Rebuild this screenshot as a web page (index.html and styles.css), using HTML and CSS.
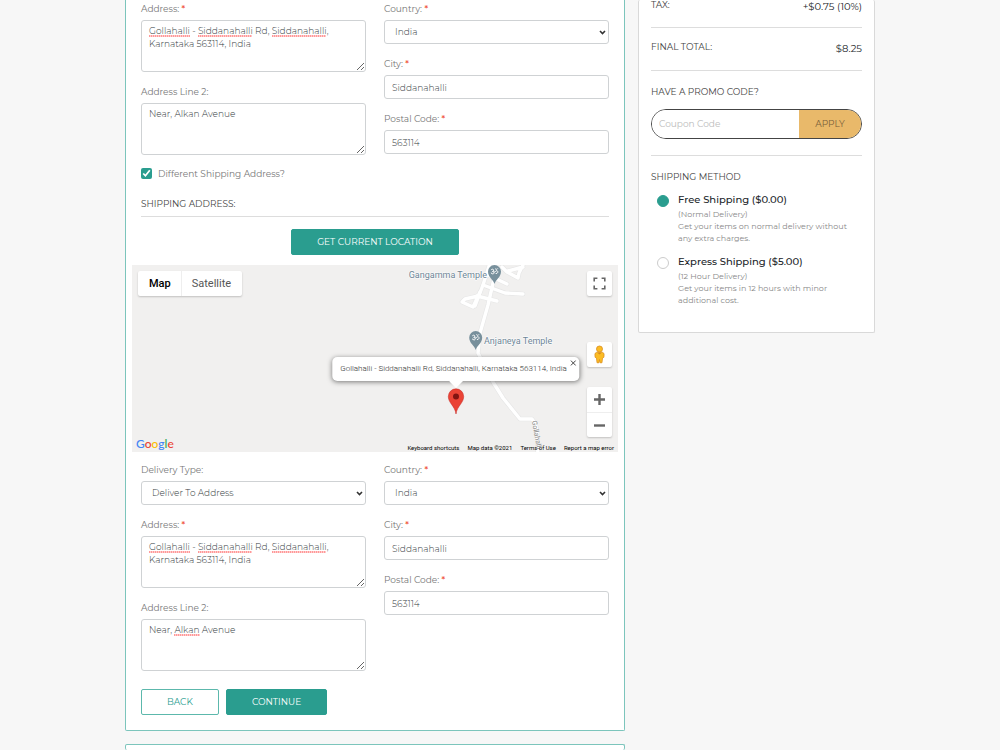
FILE: index.html
```html
<!DOCTYPE html>
<html lang="en">
<head>
    <meta charset="UTF-8">
    <meta name="viewport" content="width=device-width, initial-scale=1.0">
    <title>Checkout</title>
    <link rel="stylesheet" href="styles.css">
</head>
<body>

    <div class="page">
        <main class="checkout">
            <form class="card step">
                <div class="columns">
                    <div>
                        <div class="field">
                            <label for="bill-address">Address: <span class="required">*</span></label>
                            <div class="spell">
                                <div class="spell-marks"><i class="mark"></i><i class="mark mark-long"></i><i class="mark mark-long mark-third"></i></div>
                                <textarea id="bill-address" spellcheck="false">Gollahalli - Siddanahalli Rd, Siddanahalli, Karnataka 563114, India</textarea>
                            </div>
                        </div>
                        <div class="field">
                            <label for="bill-address2">Address Line 2:</label>
                            <textarea id="bill-address2" spellcheck="false">Near, Alkan Avenue</textarea>
                        </div>
                    </div>
                    <div>
                        <div class="field">
                            <label for="bill-country">Country: <span class="required">*</span></label>
                            <select id="bill-country"><option>India</option></select>
                        </div>
                        <div class="field">
                            <label for="bill-city">City: <span class="required">*</span></label>
                            <input type="text" id="bill-city" value="Siddanahalli">
                        </div>
                        <div class="field">
                            <label for="bill-postal">Postal Code: <span class="required">*</span></label>
                            <input type="text" id="bill-postal" value="563114">
                        </div>
                    </div>
                </div>

                <div class="check-row">
                    <input type="checkbox" id="different" checked>
                    <label for="different">Different Shipping Address?</label>
                </div>

                <h2 class="section-title">SHIPPING ADDRESS:</h2>

                <button type="button" class="btn btn-fill btn-location">GET CURRENT LOCATION</button>

                <div class="map">
                    <svg class="map-canvas" viewBox="0 0 486 187" preserveAspectRatio="xMidYMid slice" role="img" aria-label="Map">
                        <g class="road-edge">
                            <path d="M358 -2 L351 20 L343 41"/>
                            <path d="M364 5 L356 40 L348 68 L346 88 L361 117 L371 133 L388 154 L400 154 Q405 160 405 168 L406 190"/>
                            <path d="M351 20 L373 28 L391 29"/>
                            <path d="M356 10 L375 19"/>
                            <path d="M345 31 L365 36"/>
                            <path d="M348 27 L341 42 L330 37 L333 34 L346 31"/>
                            <path d="M370 2 L375 7 L386 13 L387 8 L392 -2 M376 6 L391 2"/>
                        </g>
                        <g class="road">
                            <path d="M358 -2 L351 20 L343 41"/>
                            <path d="M364 5 L356 40 L348 68 L346 88 L361 117 L371 133 L388 154 L400 154 Q405 160 405 168 L406 190"/>
                            <path d="M351 20 L373 28 L391 29"/>
                            <path d="M356 10 L375 19"/>
                            <path d="M345 31 L365 36"/>
                            <path d="M348 27 L341 42 L330 37 L333 34 L346 31"/>
                            <path d="M370 2 L375 7 L386 13 L387 8 L392 -2 M376 6 L391 2"/>
                        </g>
                        <text class="road-name" transform="translate(400 156) rotate(80)">Gollahalli</text>

                        <g transform="translate(362.5 6.5)">
                            <path class="poi" d="M0 12.5 C-1 8 -6.5 6 -6.5 0 A6.5 6.5 0 0 1 6.5 0 C6.5 6 1 8 0 12.5Z"/>
                            <path class="poi-glyph" d="M-3.4 -1.6 C-2 -3 -0.4 -2 -1 -0.6 L-2 0 C0 0 0 2.6 -1.8 2.4 L-3.6 1.4 M-1 0.2 C1 1.4 1 -1.2 2.6 -0.8 C4 0 3.2 2.4 1.2 2 M0.6 -3 C1.4 -1.8 2.6 -2 3.2 -3"/>
                        </g>
                        <text class="poi-name" x="355" y="13" text-anchor="end">Gangamma Temple</text>

                        <g transform="translate(343.7 72.5)">
                            <path class="poi" d="M0 12.5 C-1 8 -6.5 6 -6.5 0 A6.5 6.5 0 0 1 6.5 0 C6.5 6 1 8 0 12.5Z"/>
                            <path class="poi-glyph" d="M-3.4 -1.6 C-2 -3 -0.4 -2 -1 -0.6 L-2 0 C0 0 0 2.6 -1.8 2.4 L-3.6 1.4 M-1 0.2 C1 1.4 1 -1.2 2.6 -0.8 C4 0 3.2 2.4 1.2 2 M0.6 -3 C1.4 -1.8 2.6 -2 3.2 -3"/>
                        </g>
                        <text class="poi-name" x="352" y="79">Anjaneya Temple</text>

                        <path fill="#ea4335" stroke="#c5221f" stroke-width="0.5" d="M324 149 C323 141 316.3 138 316.3 131.5 A7.7 7.7 0 0 1 331.7 131.5 C331.7 138 325 141 324 149Z"/>
                        <circle cx="324" cy="131.5" r="3" fill="#811411"/>
                    </svg>

                    <div class="map-types">
                        <button type="button" class="active">Map</button>
                        <button type="button">Satellite</button>
                    </div>

                    <button type="button" class="map-button map-full" aria-label="Fullscreen">
                        <svg width="13" height="13" viewBox="0 0 13 13" fill="none" stroke="#666" stroke-width="1.6"><path d="M1.2 4.4V1.2H4.4 M8.6 1.2H11.8V4.4 M11.8 8.6V11.8H8.6 M4.4 11.8H1.2V8.6"/></svg>
                    </button>
                    <button type="button" class="map-button map-pegman" aria-label="Street View">
                        <svg width="11" height="19" viewBox="0 0 12 20">
                            <path d="M3 7.5 Q1 8 1 10 L1.2 13 L2.7 14 L3.3 19 H5.4 L6 15.5 L6.6 19 H8.7 L9.3 14 L10.8 13 L11 10 Q11 8 9 7.5Z" fill="#fbbc24" stroke="#d98a1c" stroke-width="0.8"/>
                            <path d="M3.6 8 H8.4 L6 10Z" fill="#d98a1c"/>
                            <circle cx="6" cy="4" r="3.3" fill="#fbbc24" stroke="#d98a1c" stroke-width="0.8"/>
                        </svg>
                    </button>
                    <div class="map-zoom">
                        <button type="button" aria-label="Zoom in">
                            <svg width="11" height="11" viewBox="0 0 11 11" stroke="#666" stroke-width="2.4"><path d="M0 5.5H11M5.5 0V11"/></svg>
                        </button>
                        <button type="button" aria-label="Zoom out">
                            <svg width="11" height="11" viewBox="0 0 11 11" stroke="#666" stroke-width="2.4"><path d="M0 5.5H11"/></svg>
                        </button>
                    </div>

                    <div class="info-window">
                        Gollahalli - Siddanahalli Rd, Siddanahalli, Karnataka 563114, India
                        <button type="button" class="info-close" aria-label="Close">
                            <svg width="6" height="6" viewBox="0 0 6 6" stroke="#444" stroke-width="1"><path d="M0.5 0.5L5.5 5.5M5.5 0.5L0.5 5.5"/></svg>
                        </button>
                    </div>

                    <a href="#" class="google"><span class="blue">G</span><span class="red">o</span><span class="yellow">o</span><span class="blue">g</span><span class="green">l</span><span class="red">e</span></a>

                    <div class="map-legal">
                        <a href="#">Keyboard shortcuts</a>
                        <span>Map data ©2021</span>
                        <a href="#">Terms of Use</a>
                        <a href="#">Report a map error</a>
                    </div>
                </div>

                <div class="columns">
                    <div>
                        <div class="field">
                            <label for="delivery-type">Delivery Type:</label>
                            <select id="delivery-type"><option>Deliver To Address</option></select>
                        </div>
                        <div class="field">
                            <label for="ship-address">Address: <span class="required">*</span></label>
                            <div class="spell">
                                <div class="spell-marks"><i class="mark"></i><i class="mark mark-long"></i><i class="mark mark-long mark-third"></i></div>
                                <textarea id="ship-address" spellcheck="false">Gollahalli - Siddanahalli Rd, Siddanahalli, Karnataka 563114, India</textarea>
                            </div>
                        </div>
                        <div class="field">
                            <label for="ship-address2">Address Line 2:</label>
                            <div class="spell">
                                <div class="spell-marks"><i class="mark mark-short"></i></div>
                                <textarea id="ship-address2" spellcheck="false">Near, Alkan Avenue</textarea>
                            </div>
                        </div>
                    </div>
                    <div>
                        <div class="field">
                            <label for="ship-country">Country: <span class="required">*</span></label>
                            <select id="ship-country"><option>India</option></select>
                        </div>
                        <div class="field">
                            <label for="ship-city">City: <span class="required">*</span></label>
                            <input type="text" id="ship-city" value="Siddanahalli">
                        </div>
                        <div class="field">
                            <label for="ship-postal">Postal Code: <span class="required">*</span></label>
                            <input type="text" id="ship-postal" value="563114">
                        </div>
                    </div>
                </div>

                <div class="actions">
                    <button type="button" class="btn btn-line">BACK</button>
                    <button type="button" class="btn btn-fill">CONTINUE</button>
                </div>
            </form>

            <section class="card next-step"></section>
        </main>

        <aside class="card summary">
            <div class="total-row">
                <span>TAX:</span>
                <span class="amount">+$0.75 (10%)</span>
            </div>
            <div class="total-row">
                <span>FINAL TOTAL:</span>
                <span class="amount">$8.25</span>
            </div>

            <div class="promo">
                <label for="coupon">HAVE A PROMO CODE?</label>
                <div class="promo-box">
                    <input type="text" id="coupon" placeholder="Coupon Code">
                    <button type="button">APPLY</button>
                </div>
            </div>

            <h2 class="method-title">SHIPPING METHOD</h2>
            <div class="method">
                <input type="radio" name="method" id="free" checked>
                <label for="free">
                    <strong>Free Shipping ($0.00)</strong>
                    <small>(Normal Delivery)</small>
                    <small>Get your items on normal delivery without any extra charges.</small>
                </label>
            </div>
            <div class="method">
                <input type="radio" name="method" id="express">
                <label for="express">
                    <strong>Express Shipping ($5.00)</strong>
                    <small>(12 Hour Delivery)</small>
                    <small>Get your items in 12 hours with minor additional cost.</small>
                </label>
            </div>
        </aside>
    </div>

</body>
</html>
```

FILE: styles.css
```css
* {
    box-sizing: border-box;
}

body {
    margin: 0;
    background-color: #f7f7f7;
    color: #777;
    font-family: Montserrat, Inter, sans-serif;
    font-size: 9px;
    font-weight: 400;
    line-height: 16px;
}

button, input, select, textarea {
    font: inherit;
    color: inherit;
}

button {
    cursor: pointer;
}

.page {
    max-width: 750px;
    min-height: 100vh;
    margin: 0 auto;
    display: grid;
    grid-template-columns: minmax(0, 1fr) 237px;
    gap: 13px;
    align-items: start;
}

.checkout {
    min-height: 100vh;
    display: flex;
    flex-direction: column;
    gap: 13px;
}

.card {
    background-color: #fff;
    border: 1px solid #d9d9d9;
    border-radius: 2px;
}

.step, .next-step {
    border-color: #7cc5bc;
}

.step {
    border-top: none;
    border-top-left-radius: 0;
    border-top-right-radius: 0;
    padding: 1px 15px 15px;
}

.next-step {
    flex: 1;
    border-bottom: none;
}

/* Form fields */
.columns {
    display: grid;
    grid-template-columns: 1fr 1fr;
    gap: 18px;
}

.field {
    margin-bottom: 12px;
}

.field label {
    display: block;
    margin-bottom: 3px;
}

.required {
    color: #f0543c;
    font-weight: 500;
}

.field input, .field select, .field textarea {
    display: block;
    width: 100%;
    height: 24px;
    padding: 0 7px;
    border: 1px solid #cfd2d4;
    border-radius: 3px;
    background-color: #fff;
    color: #343a40;
    font-weight: 300;
}

.field select {
    appearance: none;
    padding: 0 10px;
    background: #fff url("data:image/svg+xml,%3Csvg xmlns='http://www.w3.org/2000/svg' width='7' height='5' fill='none' stroke='%23333' stroke-width='1.6'%3E%3Cpath d='M1 1l2.5 2.5L6 1'/%3E%3C/svg%3E") no-repeat right 2px center;
}

.field textarea {
    height: 52px;
    padding: 3px 7px;
    line-height: 13px;
    resize: vertical;
}

/* The marks lie in the same grid cell, behind the textarea */
.spell {
    display: grid;
}

.spell > * {
    grid-area: 1 / 1;
}

.field .spell textarea {
    position: relative;
    background-color: transparent;
}

.spell-marks {
    display: flex;
    gap: 8px;
    padding: 15px 8px;
}

.mark {
    width: 41px;
    height: 2px;
    background-image: repeating-linear-gradient(90deg, #f99 0 1px, #fcc 1px 2px);
}

.mark-long {
    width: 54px;
}

.mark-third {
    margin-left: 12px;
}

.mark-short {
    width: 26px;
    margin-left: 25px;
}

.check-row {
    height: 13px;
    display: flex;
    align-items: center;
    gap: 6px;
}

.check-row input {
    width: 11px;
    height: 11px;
    margin: 0;
    accent-color: #2a9d8f;
}

.section-title {
    margin: 16px 0 12px;
    padding-bottom: 4px;
    border-bottom: 1px solid #ddd;
    color: #444;
    font-size: 9px;
    font-weight: 400;
}

/* Buttons */
.btn {
    height: 26px;
    padding: 0 25px;
    border: 1px solid #2a9d8f;
    border-radius: 2px;
}

.btn-fill {
    background-color: #2a9d8f;
    color: #fff;
}

.btn-line {
    background-color: #fff;
    border-color: #5cb8ac;
    color: #2a9d8f;
}

.btn-location {
    display: block;
    margin: 0 auto;
}

.actions {
    display: flex;
    gap: 7px;
    margin-top: 6px;
}

/* Map */
.map {
    position: relative;
    height: 187px;
    margin: 10px -9px;
    overflow: hidden;
    background-color: #f1f0ef;
    font-family: Roboto, sans-serif;
}

.map-canvas {
    display: block;
    width: 100%;
    height: 100%;
}

.road, .road-edge {
    fill: none;
    stroke: #fff;
    stroke-width: 3.4;
    stroke-linecap: round;
    stroke-linejoin: round;
}

.road-edge {
    stroke: #e6e6e6;
    stroke-width: 4.6;
}

.road-name {
    font-size: 7px;
    fill: #888;
}

.poi {
    fill: #78909c;
}

.poi-glyph {
    fill: none;
    stroke: #fff;
    stroke-width: 1;
}

.poi-name {
    font-size: 9px;
    fill: #6d8596;
    stroke: #fff;
    stroke-width: 1;
    paint-order: stroke;
}

.map-types, .map-button, .map-zoom {
    position: absolute;
    background-color: #fff;
    border: none;
    border-radius: 2px;
    box-shadow: 0 1px 2px rgba(0, 0, 0, 0.2);
}

.map-types {
    top: 6px;
    left: 6px;
    display: flex;
}

.map-types button {
    height: 25px;
    padding: 0 11px 0 10px;
    border: none;
    background: none;
    color: #565656;
    font-size: 11px;
}

.map-types button + button {
    border-left: 1px solid #eee;
}

.map-types .active {
    padding: 0 10px 0 11px;
    color: #000;
    font-weight: 500;
}

.map-button, .map-zoom {
    right: 6px;
    width: 25px;
}

.map-button {
    height: 25px;
    padding: 0;
    display: grid;
    place-items: center;
}

.map-full {
    top: 6px;
}

.map-pegman {
    bottom: 85px;
}

.map-zoom {
    bottom: 15px;
}

.map-zoom button {
    width: 100%;
    height: 25px;
    padding: 0;
    display: grid;
    place-items: center;
    border: none;
    background: none;
}

.map-zoom button + button {
    border-top: 1px solid #eee;
}

.info-window {
    position: absolute;
    left: calc(50% + 81px);
    bottom: 71px;
    transform: translateX(-50%);
    padding: 4px 13px 4px 8px;
    border-radius: 5px;
    background-color: #fff;
    box-shadow: 0 1px 5px rgba(0, 0, 0, 0.5);
    color: #333;
    font-size: 8px;
    font-weight: 300;
    white-space: nowrap;
}

.info-window::after {
    content: "";
    position: absolute;
    top: 100%;
    left: 50%;
    width: 14px;
    height: 7px;
    margin-left: -7px;
    background-color: #fff;
    clip-path: polygon(0 0, 100% 0, 50% 100%);
}

.info-close {
    position: absolute;
    top: 3px;
    right: 3px;
    padding: 0;
    border: none;
    background: none;
    line-height: 0;
}

.google {
    position: absolute;
    left: 4px;
    bottom: 0;
    font-family: Lato, sans-serif;
    font-size: 12px;
    font-weight: 500;
    text-decoration: none;
}

.blue { color: #4285f4; }
.red { color: #ea4335; }
.yellow { color: #fbbc05; }
.green { color: #34a853; }

.map-legal {
    position: absolute;
    right: 4px;
    bottom: 0;
    display: flex;
    gap: 8px;
    color: #000;
    font-size: 6px;
    line-height: 9px;
}

.map-legal a {
    color: inherit;
    text-decoration: none;
}

/* Order summary */
.summary {
    border-top: none;
    padding: 0 12px 26px;
    color: #444;
}

.total-row {
    display: flex;
    justify-content: space-between;
    padding-bottom: 14px;
    border-bottom: 1px solid #ddd;
}

.total-row:first-child {
    height: 28px;
}

.total-row span {
    line-height: 10px;
}

.total-row + .total-row {
    padding-top: 14px;
}

.total-row .amount {
    color: #212529;
    font-size: 10px;
    line-height: 14px;
}

.promo {
    padding: 13px 0 16px;
    border-bottom: 1px solid #ddd;
}

.promo label {
    display: block;
    margin-bottom: 9px;
}

.promo-box {
    display: flex;
    height: 30px;
    overflow: hidden;
    border: 1px solid #444;
    border-radius: 15px;
}

.promo-box input {
    flex: 1;
    min-width: 0;
    padding: 0 7px;
    border: none;
    outline: none;
}

.promo-box input::placeholder {
    color: #bbb;
}

.promo-box button {
    width: 62px;
    padding: 0;
    border: none;
    background-color: #e9b96a;
    color: #7a5f3a;
}

.method-title {
    margin: 13px 0 7px;
    font-size: 9px;
    font-weight: 400;
}

.method {
    display: flex;
    gap: 9px;
    margin-bottom: 10px;
    padding: 0 6px;
}

.method:last-child {
    margin-bottom: 0;
}

.method input {
    appearance: none;
    flex: none;
    width: 12px;
    height: 12px;
    margin: 3px 0 0;
    border: 1px solid #ccc;
    border-radius: 50%;
}

.method input:checked {
    border-color: #2a9d8f;
    background-color: #2a9d8f;
}

.method strong, .method small {
    display: block;
}

.method strong {
    color: #212529;
    font-size: 10px;
    font-weight: 500;
}

.method small {
    color: #888;
    font-size: 8px;
    line-height: 12px;
}
```
